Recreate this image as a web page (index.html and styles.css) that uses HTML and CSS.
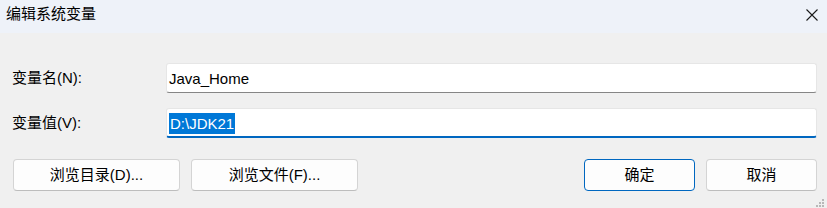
FILE: index.html
```html
<!DOCTYPE html>
<html lang="zh-CN">
<head>
<meta charset="utf-8">
<title>编辑系统变量</title>
<link rel="stylesheet" href="styles.css">
</head>
<body>
<div class="dialog">
  <div class="titlebar">
    <span class="title">编辑系统变量</span>
    <svg class="close" width="12" height="12" viewBox="0 0 12 12"><path d="M0.5 0.5 L11.5 11.5 M11.5 0.5 L0.5 11.5" stroke="#1a1a1a" stroke-width="1.1" fill="none"/></svg>
  </div>
  <div class="content">
    <div class="row">
      <span class="label">变量名(N):</span>
      <div class="field"><span class="value">Java_Home</span></div>
    </div>
    <div class="row row-second">
      <span class="label">变量值(V):</span>
      <div class="field focused"><span class="value selected">D:\JDK21</span></div>
    </div>
    <div class="buttons">
      <div class="group">
        <button class="btn wide">浏览目录(D)...</button>
        <button class="btn wide">浏览文件(F)...</button>
      </div>
      <div class="group">
        <button class="btn narrow primary">确定</button>
        <button class="btn narrow">取消</button>
      </div>
    </div>
  </div>
  <svg class="grip" width="10" height="10" viewBox="0 0 10 10"><rect x="6" y="1" width="2" height="2" fill="#b8b8b8"/><rect x="3" y="4" width="2" height="2" fill="#b8b8b8"/><rect x="6" y="4" width="2" height="2" fill="#b8b8b8"/><rect x="0" y="7" width="2" height="2" fill="#b8b8b8"/><rect x="3" y="7" width="2" height="2" fill="#b8b8b8"/><rect x="6" y="7" width="2" height="2" fill="#b8b8b8"/></svg>
</div>
</body>
</html>
```
FILE: styles.css
```css
html, body {
  margin: 0;
  padding: 0;
}
body {
  background: #f0f0f0;
  font-family: "Liberation Sans", "Noto Sans CJK SC", sans-serif;
  font-size: 15px;
  color: #000;
}
.dialog {
  position: relative;
  width: 827px;
  height: 208px;
  overflow: hidden;
}
.titlebar {
  height: 33px;
  box-sizing: border-box;
  background: #eef2f9;
  display: flex;
  justify-content: space-between;
  align-items: flex-start;
  padding: 4px 9px 0 6px;
}
.title {
  line-height: 20px;
  font-size: 15px;
}
.close {
  margin-top: 5px;
}
.content {
  padding: 30px 10px 0 12px;
}
.row {
  display: flex;
  align-items: center;
  height: 30px;
}
.row-second {
  margin-top: 15px;
}
.label {
  width: 154px;
  flex: none;
  line-height: 20px;
}
.field {
  flex: 1;
  height: 30px;
  box-sizing: border-box;
  background: #fff;
  border: 1px solid #e6e6e6;
  border-bottom-color: #868686;
  border-radius: 3px;
  display: flex;
  align-items: center;
  padding-left: 2px;
}
.field.focused {
  border-bottom: 2px solid #0067c0;
  padding-top: 1px;
}
.value {
  line-height: 21px;
}
.selected {
  background: #0078d7;
  color: #fff;
  padding: 0 1px;
}
.buttons {
  margin-top: 21px;
  padding-left: 1px;
  display: flex;
  justify-content: space-between;
}
.group {
  display: flex;
  gap: 11px;
}
.btn {
  height: 32px;
  box-sizing: border-box;
  border: 1px solid #d4d4d4;
  border-bottom-color: #bdbdbd;
  border-radius: 4px;
  background: #fdfdfd;
  font-family: inherit;
  font-size: 15px;
  color: #000;
  padding: 0;
  line-height: 20px;
}
.wide {
  width: 167px;
}
.narrow {
  width: 111px;
}
.primary {
  border: 1px solid #0067c0;
}
.grip {
  position: absolute;
  right: 1px;
  bottom: 0;
}
```
